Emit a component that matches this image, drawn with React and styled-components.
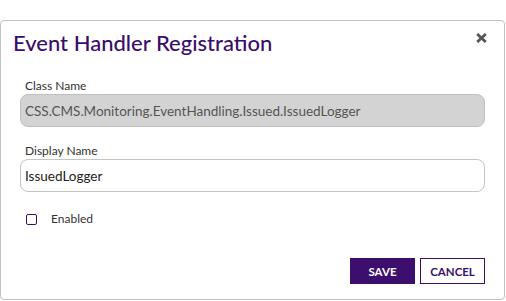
import React from 'react'
import styled, { createGlobalStyle } from 'styled-components'

const Global = createGlobalStyle`
  body {
    margin: 0;
    background: #fff;
    font-family: Lato, "Open Sans", Arial, sans-serif;
  }
`

const Dialog = styled.div`
  box-sizing: border-box;
  margin-top: 20px;
  width: 505px;
  height: 280px;
  border: 1px solid #c2c2c4;
  border-radius: 4px;
  background: #fff;
  display: flex;
  flex-direction: column;
`

const Header = styled.div`
  display: flex;
  align-items: flex-start;
  justify-content: space-between;
  padding: 9px 17px 0 12px;
`

const Title = styled.h2`
  margin: 0;
  font-size: 22px;
  line-height: 26px;
  font-weight: 500;
  color: #3a0d6c;
`

const Close = styled.button`
  border: 0;
  background: none;
  padding: 0;
  margin-top: 3px;
  width: 11px;
  height: 10px;
  cursor: pointer;
  display: flex;
`

const Body = styled.div`
  padding: 23px 19px 0 19px;
  display: flex;
  flex-direction: column;
`

const Label = styled.label`
  font-size: 12px;
  line-height: 14px;
  color: #333;
  margin: 0 0 1px 5px;
`

const Input = styled.input`
  box-sizing: border-box;
  height: 33px;
  width: 100%;
  border: 1px solid ${p => (p.readOnly ? '#bfbfbf' : '#c4c4c4')};
  border-radius: 8px;
  background: ${p => (p.readOnly ? '#d3d3d3' : '#fff')};
  color: ${p => (p.readOnly ? '#555' : '#222')};
  font-family: inherit;
  font-size: 13.5px;
  padding: 0 4px;
  margin-bottom: 17px;
  outline: none;
`

const CheckRow = styled.label`
  display: flex;
  align-items: center;
  gap: 14px;
  margin: 3px 0 0 6px;
  font-size: 12px;
  line-height: 14px;
  color: #333;
`

const Box = styled.span`
  box-sizing: border-box;
  width: 11px;
  height: 11px;
  border: 1.5px solid #3c0f6e;
  border-radius: 2px;
`

const Footer = styled.div`
  display: flex;
  justify-content: flex-end;
  gap: 5px;
  padding: 0 19px 0 0;
  margin-top: auto;
  margin-bottom: 15px;
`

const Button = styled.button`
  box-sizing: border-box;
  width: 65px;
  height: 26px;
  font-family: inherit;
  font-size: 11.5px;
  font-weight: 700;
  border: 1.5px solid #3c0f6e;
  background: ${p => (p.primary ? '#3c0f6e' : '#fff')};
  color: ${p => (p.primary ? '#fff' : '#3c0f6e')};
  cursor: pointer;
`

export default function App() {
  return (
    <>
      <Global />
      <Dialog>
        <Header>
          <Title>Event Handler Registration</Title>
          <Close aria-label="Close">
            <svg width="11" height="10" viewBox="0 0 11 10">
              <path d="M1.2 1 L9.8 9 M9.8 1 L1.2 9" stroke="#555" strokeWidth="2.8" />
            </svg>
          </Close>
        </Header>
        <Body>
          <Label>Class Name</Label>
          <Input readOnly value="CSS.CMS.Monitoring.EventHandling.Issued.IssuedLogger" />
          <Label>Display Name</Label>
          <Input defaultValue="IssuedLogger" />
          <CheckRow>
            <Box />
            Enabled
          </CheckRow>
        </Body>
        <Footer>
          <Button primary>SAVE</Button>
          <Button>CANCEL</Button>
        </Footer>
      </Dialog>
    </>
  )
}
